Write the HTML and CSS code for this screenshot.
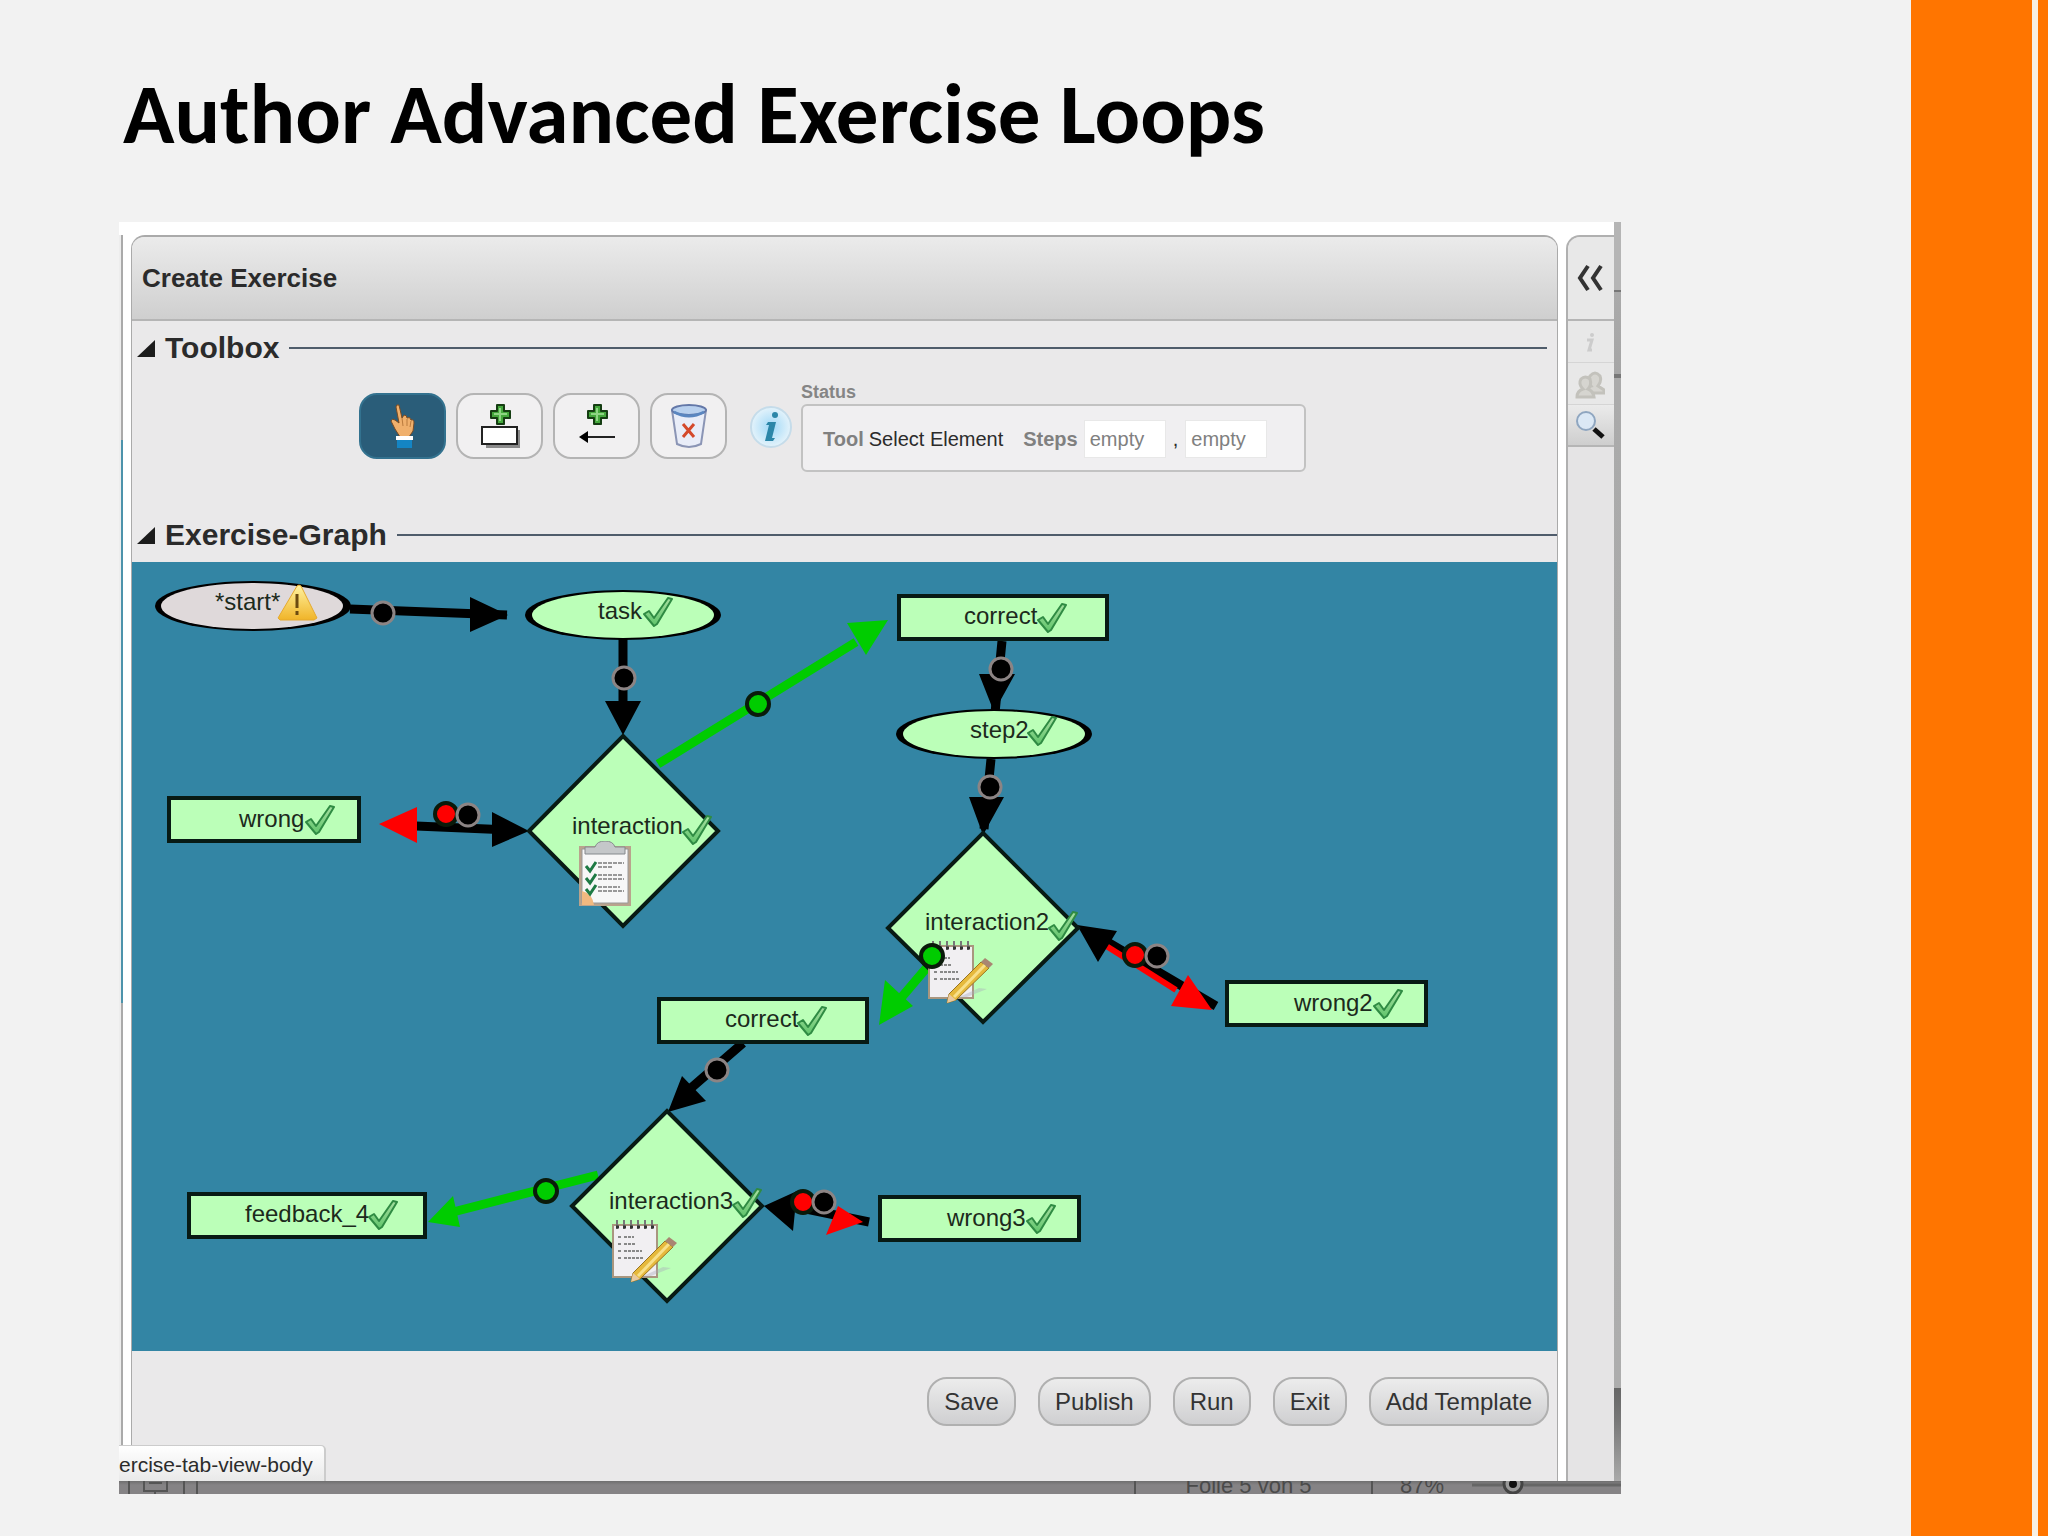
FILE: index.html
```html
<!DOCTYPE html>
<html lang="en">
<head>
  <meta charset="UTF-8">
  <meta name="viewport" content="width=device-width, initial-scale=1.0">
  <title>Author Advanced Exercise Loops</title>
  <link rel="stylesheet" href="styles.css">
</head>
<body>
  <div class="slide">
    <main class="content">
      <h1>Author Advanced Exercise Loops</h1>

      <div class="window">
        <div class="window-row">
          <div class="left-edge"></div>

          <section class="panel">
            <header class="panel-header">Create Exercise</header>

            <h2 class="section-title inset">
              <svg class="triangle" viewBox="0 0 18 17"><path d="M18 0v17H0z"/></svg>
              Toolbox
            </h2>
            <div class="toolbar">
              <button type="button" class="tool active" aria-label="Select element">
                <svg width="30" height="46" viewBox="0 0 30 46">
                  <path d="M8 4q0-3 3-2l3 13 2-3q3 0 3 3 3-2 4 2 3-1 3 3l-1 8-4 6H12L7 26l-4-8q1-3 4-1l4 3z" fill="#f0b06c" stroke="#7a4a22"/>
                  <path d="M14 15l1 8M19 16v7M23 18l-1 6" stroke="#b97a3c" fill="none"/>
                  <path d="M8 33h17v4H8z" fill="#fff"/>
                  <path d="M9 37h15v8H9z" fill="#1485c4"/>
                </svg>
              </button>
              <button type="button" class="tool" aria-label="Add step">
                <svg width="44" height="48" viewBox="0 0 44 48">
                  <path d="M8 28h34v18H8z" fill="#8a8a8a"/>
                  <path d="M4 25h35v17H4z" fill="#fff" stroke="#222" stroke-width="2"/>
                  <use href="#plus" x="11" y="1"/>
                </svg>
              </button>
              <button type="button" class="tool" aria-label="Add connection">
                <svg width="44" height="48" viewBox="0 0 44 48">
                  <path d="M8 35h32" stroke="#222" stroke-width="2"/>
                  <path d="M4 35l9-6v12z" fill="#000"/>
                  <use href="#plus" x="11" y="1"/>
                </svg>
              </button>
              <button type="button" class="tool narrow" aria-label="Delete">
                <svg width="36" height="46" viewBox="0 0 36 46">
                  <path d="M1 7l5 34q12 6 24 0l5-34z" fill="#e9edf8" stroke="#8b95b5" stroke-width="2"/>
                  <ellipse cx="18" cy="7" rx="17" ry="5" fill="#b8d0ee" stroke="#6478a8" stroke-width="2"/>
                  <path d="M3 9q15 8 30 0" fill="none" stroke="#5a86c0" stroke-width="3"/>
                  <path d="M12 21l11 13M23 21L12 34" stroke="#d4492c" stroke-width="3"/>
                </svg>
              </button>
              <svg class="info" viewBox="0 0 44 44">
                <circle cx="22" cy="22" r="20" fill="url(#infoFill)" stroke="#c5dcea" stroke-width="2"/>
                <circle cx="26" cy="10" r="3" fill="#2b86a8"/>
                <path d="M19 17h8l-4 16h3l-2 3h-8l4-16h-3z" fill="#2b86a8"/>
              </svg>
              <div class="status">
                <span class="status-label">Status</span>
                <div class="status-box">
                  <b>Tool</b><span class="status-tool">Select Element</span>
                  <label for="step-from">Steps</label>
                  <input id="step-from" type="text" placeholder="empty">
                  <span class="comma">,</span>
                  <input id="step-to" type="text" placeholder="empty" aria-label="Second step">
                </div>
              </div>
            </div>

            <h2 class="section-title">
              <svg class="triangle" viewBox="0 0 18 17"><path d="M18 0v17H0z"/></svg>
              Exercise-Graph
            </h2>

            <svg class="graph">
              <defs>
                <linearGradient id="tickFill" x1="0" y1="0" x2="0" y2="1">
                  <stop offset="0" stop-color="#a6dfa0"/>
                  <stop offset="1" stop-color="#5fc46a"/>
                </linearGradient>
                <linearGradient id="warnFill" x1="0" y1="0" x2="0" y2="1">
                  <stop offset="0" stop-color="#fff3a0"/>
                  <stop offset="1" stop-color="#f0b429"/>
                </linearGradient>
                <radialGradient id="infoFill">
                  <stop offset="0" stop-color="#9fd8f7"/>
                  <stop offset="1" stop-color="#e4f3fb"/>
                </radialGradient>
                <symbol id="plus" width="24" height="24" viewBox="0 0 24 24">
                  <path d="M9 3h7v6h6v7h-6v6H9v-6H3V9h6z" fill="#888" opacity=".6"/>
                  <path d="M8 2h7v6h6v7h-6v6H8v-6H2V8h6z" fill="#45a83c" stroke="#153d12" stroke-width="2" stroke-linejoin="round"/>
                  <path d="M11 5v13M5 11h13" stroke="#8ed583" stroke-width="2"/>
                </symbol>
                <symbol id="tick" width="30" height="30" viewBox="0 0 30 30">
                  <path d="M1 17l5-3 5 7L25 1l4 1-15 25-3 2z" fill="url(#tickFill)" stroke="#2f8b43" stroke-width="2" stroke-linejoin="round"/>
                </symbol>
                <symbol id="notepad" width="66" height="64" viewBox="0 0 66 64">
                  <path d="M2 6h44v52H2z" fill="#f1eff2" stroke="#a9967f" stroke-width="2"/>
                  <path d="M6 1v9M13 1v9M20 1v9M27 1v9M34 1v9M41 1v9" stroke="#777" stroke-width="2"/>
                  <path d="M5 8h3M12 8h3M19 8h3M26 8h3M33 8h3M40 8h3" stroke="#333" stroke-width="3"/>
                  <path d="M7 18h3M13 18h10M7 25h3M13 25h11M7 32h3M13 32h18M7 39h3M13 39h20" stroke="#888" stroke-width="2" stroke-dasharray="3 1"/>
                  <path d="M30 58l22-10 8 1-20 8z" fill="#aab" opacity=".4"/>
                  <path d="M22 54L54 22l8 6-33 32-9 3z" fill="#e6b93c" stroke="#9a7420" stroke-width="1"/>
                  <path d="M27 57L58 25" stroke="#f8e08a" stroke-width="3"/>
                  <path d="M54 22l4-4 8 6-4 4z" fill="#a98672"/>
                  <path d="M22 54l7 6-9 3z" fill="#e8c9a0"/>
                </symbol>
                <symbol id="clipboard" width="54" height="66" viewBox="0 0 54 66">
                  <path d="M1 5h52v60H1z" fill="#b9a38d"/>
                  <path d="M4 8h46v54H4z" fill="#f7f7f7" stroke="#999"/>
                  <path d="M4 64V50q10 2 12 14z" fill="#f1b980"/>
                  <path d="M7 13V6h10q2-6 10-6t10 6h10v7z" fill="#c4c7c9" stroke="#85898c"/>
                  <path d="M8 25l4 5 6-9M8 37l4 5 6-9M8 48l4 5 6-9" fill="none" stroke="#1e7a44" stroke-width="3"/>
                  <path d="M20 22h26M20 26h14M20 34h24M20 38h26M20 46h22M20 50h26" stroke="#999" stroke-width="2" stroke-dasharray="4 1"/>
                </symbol>
              </defs>

              <!-- connections -->
              <g class="edge">
                <path d="M218 46L375 52M491 76v80M870 78l-7 72M859 196l-7 70M611 480l-60 52M284 263l96 4M960 370l124 73M650 641l87 18"/>
                <path class="go" d="M526 201L724 79M797 402l-34 40M466 612l-145 37"/>
                <path class="fail" d="M968 379l76 48"/>
              </g>
              <g class="head">
                <path d="M338 34v35l38-17zM473 138h36l-18 34zM847 111h36l-21 38zM837 234h35l-21 38zM550 513l24 25-38 11zM360 249v35l37-16zM945 362l40 6-19 31zM632 643l33-15-4 40z"/>
                <path class="go" d="M715 60l19 32 22-35zM753 417l28 26-34 19zM321 633l7 31-32-5z"/>
                <path class="fail" d="M285 244v36l-38-19zM1056 412l-17 31 41 4zM706 643l-12 29 37-13z"/>
              </g>

              <!-- nodes -->
              <g>
                <ellipse cx="121" cy="43" rx="98" ry="25"/>
                <ellipse class="idle" cx="120" cy="43" rx="91" ry="23"/>
                <ellipse cx="491" cy="52" rx="98" ry="25"/>
                <ellipse class="ok" cx="491" cy="52" rx="91" ry="23"/>
                <ellipse cx="862" cy="171" rx="98" ry="25"/>
                <ellipse class="ok" cx="862" cy="171" rx="91" ry="23"/>
              </g>
              <g class="ok outlined">
                <rect x="37" y="235" width="190" height="43"/>
                <rect x="767" y="33" width="208" height="43"/>
                <rect x="527" y="436" width="208" height="43"/>
                <rect x="57" y="631" width="236" height="43"/>
                <rect x="748" y="634" width="199" height="43"/>
                <rect x="1095" y="419" width="199" height="43"/>
                <path d="M491 173l95 95-95 95-94-95zM851 270l95 95-95 94-95-94zM535 548l95 95-95 95-95-95z"/>
              </g>
              <g class="node-text">
                <text x="83" y="47">*start*</text>
                <text x="466" y="56">task</text>
                <text x="832" y="61">correct</text>
                <text x="838" y="175">step2</text>
                <text x="107" y="264">wrong</text>
                <text x="440" y="271">interaction</text>
                <text x="793" y="367">interaction2</text>
                <text x="1162" y="448">wrong2</text>
                <text x="593" y="464">correct</text>
                <text x="113" y="659">feedback_4</text>
                <text x="477" y="646">interaction3</text>
                <text x="815" y="663">wrong3</text>
              </g>
              <path d="M165 23q2-2 4 0l16 32-3 2h-34l-2-2z" fill="url(#warnFill)" stroke="#e5a92e"/>
              <path d="M165 31v14M165 48v4" stroke="#6b4a10" stroke-width="3"/>
              <use href="#tick" x="511" y="34"/>
              <use href="#tick" x="905" y="40"/>
              <use href="#tick" x="895" y="153"/>
              <use href="#tick" x="173" y="242"/>
              <use href="#tick" x="550" y="252"/>
              <use href="#tick" x="916" y="348"/>
              <use href="#tick" x="1241" y="426"/>
              <use href="#tick" x="665" y="443"/>
              <use href="#tick" x="236" y="637"/>
              <use href="#tick" x="600" y="625"/>
              <use href="#tick" x="894" y="641"/>
              <use href="#clipboard" x="446" y="278"/>
              <use href="#notepad" x="795" y="377"/>
              <use href="#notepad" x="479" y="656"/>

              <!-- connection handles -->
              <g class="handle">
                <circle class="fail" cx="314" cy="251" r="11"/>
                <circle class="fail" cx="1003" cy="392" r="11"/>
                <circle class="fail" cx="671" cy="639" r="11"/>
                <circle cx="251" cy="50" r="11"/>
                <circle cx="492" cy="115" r="11"/>
                <circle cx="869" cy="106" r="11"/>
                <circle cx="858" cy="224" r="11"/>
                <circle cx="585" cy="507" r="11"/>
                <circle cx="336" cy="252" r="11"/>
                <circle cx="1025" cy="393" r="11"/>
                <circle cx="692" cy="639" r="11"/>
                <circle class="go" cx="626" cy="141" r="11"/>
                <circle class="go" cx="800" cy="393" r="11"/>
                <circle class="go" cx="414" cy="628" r="11"/>
              </g>
            </svg>

            <footer class="actions">
              <button type="button">Save</button>
              <button type="button">Publish</button>
              <button type="button">Run</button>
              <button type="button">Exit</button>
              <button type="button">Add Template</button>
            </footer>
          </section>

          <aside class="sidebar">
            <button type="button" class="collapse" aria-label="Expand sidebar">
              <svg width="26" height="28" viewBox="0 0 26 28"><path d="M11 2L3 14l8 12M24 2l-8 12 8 12" fill="none" stroke="#333" stroke-width="4"/></svg>
            </button>
            <button type="button" aria-label="Info">
              <svg width="14" height="20" viewBox="0 0 14 20"><circle cx="9" cy="3" r="2" fill="#ccc"/><path d="M4 8h5l-3 10h3" fill="none" stroke="#ccc" stroke-width="3"/></svg>
            </button>
            <button type="button" aria-label="Users">
              <svg width="30" height="30" viewBox="0 0 30 30" fill="#d6d5d0" stroke="#c3c2bc" stroke-width="3"><path d="M13 24q-1-6 3-7-4-5-1-10 5-6 10 0 2 5-2 10l6 4v3z"/><path d="M2 28q0-6 6-8-5-5-2-10 4-4 9 0 2 6-2 10 5 2 6 8z"/></svg>
            </button>
            <button type="button" class="active" aria-label="Search">
              <svg width="30" height="32" viewBox="0 0 30 32"><path d="M19 20l9 8" stroke="#111" stroke-width="5"/><circle cx="11" cy="12" r="9" fill="#dbe8f5" stroke="#8fa6c0" stroke-width="2"/></svg>
            </button>
          </aside>
          <div class="right-edge"></div>
        </div>

        <div class="bottom-bar">
          <svg class="bar-icons" width="80" height="13" viewBox="0 0 80 13"><path d="M10 0v13M65 0v13M78 0v13M25 0v10h23V0M30 2h13M36 10v3" fill="none" stroke="#555" stroke-width="2"/></svg>
          <span class="bar-page">Folie 5 von 5</span>
          <span class="bar-zoom">87%</span>
          <svg class="bar-slider" viewBox="0 0 149 13"><path d="M0 4h149" stroke="#666" stroke-width="3"/><circle cx="41" cy="3" r="9" fill="#999" stroke="#444" stroke-width="3"/><circle cx="41" cy="3" r="4" fill="#111"/></svg>
        </div>
        <div class="link-hint">ercise-tab-view-body</div>
      </div>
    </main>
    <div class="band"></div>
  </div>
</body>
</html>
```
FILE: styles.css
```css
* {
  box-sizing: border-box;
}
body {
  margin: 0;
  background: #f2f2f2;
  font-family: "Liberation Sans", Arial, sans-serif;
  color: #2b2b2b;
}
.slide {
  display: flex;
  min-height: 100vh;
}
.content {
  flex: 1;
  padding: 68px 290px 42px 119px;
}
.band {
  width: 137px;
  background: linear-gradient(to right, #ff7500 121px, #f7efe4 121px, #f7efe4 127px, #ff7500 127px);
}
h1 {
  margin: 0 0 62px 4px;
  font-family: Carlito, Lato, sans-serif;
  font-size: 85px;
  line-height: 92px;
  font-weight: bold;
  color: #000;
  white-space: nowrap;
}

/* application window */
.window {
  position: relative;
  overflow: hidden;
  background: #fff;
}
.window-row {
  display: flex;
}
.left-edge {
  width: 4px;
  margin: 13px 8px 0 0;
  background: #ededed;
  border-right: 2px solid #aaa;
  border-image: linear-gradient(#aaa 206px, #4d93ab 206px, #4d93ab 768px, #aaa 768px) 1;
}
.panel {
  flex: 1;
  min-width: 0;
  margin-top: 13px;
  background: #eae9ea;
  border: 1px solid #aaa;
  border-width: 2px 1px 0;
  border-radius: 14px 14px 0 0;
}
.panel-header {
  height: 84px;
  padding-left: 10px;
  background: linear-gradient(#ebebeb, #cfcfcf);
  border-bottom: 2px solid #b5b5b5;
  border-radius: 12px 12px 0 0;
  font-size: 26px;
  line-height: 82px;
  font-weight: bold;
}
.section-title {
  display: flex;
  align-items: center;
  gap: 10px;
  height: 54px;
  margin: 0;
  padding-left: 5px;
  font-size: 30px;
  line-height: 54px;
}
.section-title::after {
  content: "";
  flex: 1;
  height: 2px;
  background: #4f5c6b;
}
.section-title.inset {
  padding-right: 10px;
}
.triangle {
  width: 18px;
  height: 17px;
  fill: #1c1c1c;
}
.toolbar {
  display: flex;
  gap: 10px;
  height: 133px;
  padding: 18px 0 0 227px;
}
.tool {
  display: flex;
  align-items: center;
  justify-content: center;
  width: 87px;
  height: 66px;
  padding: 0;
  background: #f1f0f1;
  border: 2px solid #b4b4b4;
  border-radius: 18px;
}
.tool.narrow {
  width: 77px;
}
.tool.active {
  background: #2a5d79;
  border-color: #33728f;
}
.info {
  width: 44px;
  height: 44px;
  margin: 12px 0 0 12px;
}
.status {
  margin-left: -2px;
}
.status-label {
  display: block;
  margin-top: -12px;
  font-size: 18px;
  line-height: 23px;
  font-weight: bold;
  color: #858585;
}
.status-box {
  display: flex;
  align-items: center;
  width: 505px;
  height: 68px;
  padding: 2px 0 0 20px;
  background: #f0eff1;
  border: 2px solid #c2c2c2;
  border-radius: 6px;
  font-size: 20px;
}
.status-box b, .status-box label {
  color: #808080;
  font-weight: bold;
}
.status-tool {
  margin: 0 20px 0 5px;
}
.status-box input {
  width: 82px;
  height: 38px;
  margin-left: 6px;
  padding: 0 5px;
  border: 1px solid #e8e8e8;
  background: #fff;
  font: inherit;
}
.status-box input::placeholder {
  color: #808080;
}
.comma {
  margin: 0 1px 0 7px;
}

/* exercise graph */
.graph {
  display: block;
  width: 100%;
  height: 789px;
  padding-top: 1px;
  background: #3385a4;
}
.edge path {
  fill: none;
  stroke: #000;
  stroke-width: 9;
}
.edge .go {
  stroke: #0c0;
}
.edge .fail {
  stroke: #f00;
  stroke-width: 6;
}
.go {
  fill: #0c0;
}
.fail {
  fill: #f00;
}
.ok {
  fill: #bbffb8;
}
.idle {
  fill: #dfd9da;
}
.outlined {
  stroke: #081a14;
  stroke-width: 4;
}
.node-text {
  font-size: 24px;
  fill: #1c2a1c;
}
.handle circle {
  stroke: #8c8484;
  stroke-width: 3;
}
.handle .go, .handle .fail {
  stroke: #0a1a0a;
  stroke-width: 4;
}

.actions {
  display: flex;
  justify-content: flex-end;
  gap: 22px;
  height: 130px;
  padding: 26px 8px 0 0;
}
.actions button {
  height: 49px;
  padding: 0 15px;
  border: 2px solid #b0b0b0;
  border-radius: 20px;
  background: linear-gradient(#ececec, #cfcfd1);
  font-family: inherit;
  font-size: 24px;
  color: #333;
}

.sidebar {
  width: 48px;
  margin: 13px 0 0 8px;
  background: #e5e4e5;
  border: 2px solid #b0b0b0;
  border-width: 2px 0 0 2px;
  border-radius: 14px 0 0 0;
}
.sidebar button {
  display: flex;
  align-items: center;
  justify-content: center;
  width: 100%;
  height: 42px;
  padding: 0 3px 0 0;
  border: 0;
  border-bottom: 1px solid #d5d5d5;
  background: #e8e8e8;
}
.sidebar .collapse {
  height: 84px;
  border-bottom: 2px solid #b5b5b5;
  border-radius: 12px 0 0 0;
}
.sidebar .active {
  background: linear-gradient(#ebebeb, #cecece);
  border-bottom: 2px solid #b5b5b5;
}
.right-edge {
  width: 7px;
  background: linear-gradient(#b5b5b5 68px, #777 68px, #777 70px, #aaa 70px, #a5a5a5 152px, #777 152px, #777 156px, #aaa 156px, #adadad 1166px, #666 1166px, #777 1198px, #aaa);
}
.bottom-bar {
  display: flex;
  height: 13px;
  overflow: hidden;
  background: linear-gradient(#6f6f6f, #858385 4px);
  font-size: 22px;
  line-height: 9px;
  color: #4a4a4a;
}
.bar-page {
  margin-left: auto;
  width: 239px;
  padding-right: 10px;
  border: 2px solid #555;
  border-width: 0 2px;
  text-align: center;
}
.bar-zoom {
  width: 99px;
  padding-left: 27px;
}
.bar-slider {
  width: 149px;
}
.link-hint {
  position: absolute;
  left: 0;
  bottom: 13px;
  width: 207px;
  height: 36px;
  background: linear-gradient(#fff, #e9e9e9);
  border: 1px solid #ccc;
  border-width: 1px 2px 0 0;
  border-radius: 0 5px 0 0;
  font-size: 21px;
  line-height: 38px;
}
```
